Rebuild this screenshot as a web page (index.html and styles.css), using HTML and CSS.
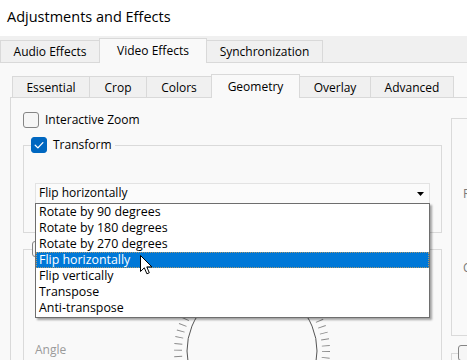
FILE: index.html
```html
<!DOCTYPE html>
<html>
<head>
<meta charset="utf-8">
<link rel="stylesheet" href="styles.css">
</head>
<body>
<div class="window">
  <div class="titlebar">Adjustments and Effects</div>
  <div class="tabstrip outer">
    <div class="tab w-audio">Audio Effects</div>
    <div class="tab sel w-video">Video Effects</div>
    <div class="tab w-sync">Synchronization</div>
  </div>
  <div class="outer-pane">
    <div class="tabstrip inner">
      <div class="itab w-ess">Essential</div>
      <div class="itab w-crop">Crop</div>
      <div class="itab w-colors">Colors</div>
      <div class="itab sel w-geo">Geometry</div>
      <div class="itab w-overlay">Overlay</div>
      <div class="itab w-adv">Advanced</div>
    </div>
    <div class="inner-pane">
      <div class="left-col">
        <div class="check-row"><span class="cb"></span><span class="lbl">Interactive Zoom</span></div>
        <fieldset class="group transform">
          <legend><span class="legend-inner"><span class="cb checked"><svg width="16" height="16" viewBox="0 0 16 16"><path d="M4.2 8.3 L6.9 10.9 L11.9 5.6" fill="none" stroke="#fff" stroke-width="1.3" stroke-linecap="round" stroke-linejoin="round"/></svg></span><span class="lbl">Transform</span></span></legend>
          <div class="combo"><span class="combo-text">Flip horizontally</span><svg class="arrow" width="7" height="4" viewBox="0 0 7 4"><polygon points="0,0 7,0 3.5,4" fill="#000"/></svg></div>
        </fieldset>
        <fieldset class="group rotate">
          <legend><span class="legend-inner"><span class="cb"></span></span></legend>
          <svg class="dial" width="417" height="85" viewBox="0 0 417 85">
            <circle cx="228" cy="94" r="74" fill="none" stroke="#8a8a8a" stroke-width="8" stroke-dasharray="0.9 5.558"/>
            <circle cx="228" cy="94" r="65" fill="none" stroke="#555" stroke-width="1"/>
          </svg>
          <div class="angle">Angle</div>
        </fieldset>
      </div>
      <div class="right-col">
        <fieldset class="group side">
          <legend><span class="legend-inner"><span class="cb"></span></span></legend>
          <div class="side-label first">R</div>
          <div class="side-label second">C</div>
        </fieldset>
        <fieldset class="group side2">
          <legend><span class="legend-inner"><span class="cb"></span></span></legend>
          <div class="side-fill"></div>
        </fieldset>
      </div>
    </div>
  </div>
  <ul class="dropdown">
    <li>Rotate by 90 degrees</li>
    <li>Rotate by 180 degrees</li>
    <li>Rotate by 270 degrees</li>
    <li class="hl">Flip horizontally</li>
    <li>Flip vertically</li>
    <li>Transpose</li>
    <li>Anti-transpose</li>
  </ul>
  <svg class="cursor" width="13" height="21" viewBox="0 0 13 21"><path d="M0.5 0.5 L0.5 16.5 L4.3 12.8 L6.9 18.8 L9.3 17.8 L6.8 11.9 L11.9 11.9 Z" fill="#fff" stroke="#000" stroke-width="1" stroke-linejoin="miter"/></svg>
</div>
</body>
</html>
```

FILE: styles.css
```css
* { box-sizing: border-box; }
html, body { margin: 0; padding: 0; }
body {
  width: 467px;
  height: 360px;
  overflow: hidden;
  background: #f9f9f9;
  font-family: "Open Sans", "Noto Sans", sans-serif;
  font-size: 12px;
  line-height: 16px;
  color: #000;
}
.window {
  position: relative;
  width: 467px;
  height: 360px;
  overflow: hidden;
  background: #f9f9f9;
}
.titlebar {
  height: 36px;
  background: #fff;
  padding: 7px 0 0 7px;
  font-size: 14.5px;
  line-height: 20px;
}
.tabstrip { display: flex; align-items: flex-end; }
.tabstrip.outer { height: 26px; background: #f0f0f0; }
.tab {
  height: 22px;
  padding-top: 3px;
  text-align: center;
  background: #f0f0f0;
  border: 1px solid #d9d9d9;
  border-bottom: none;
  margin-left: -1px;
  white-space: nowrap;
}
.tab:first-child { margin-left: 0; }
.tab.sel {
  position: relative;
  z-index: 1;
  height: 25px;
  padding-top: 4px;
  margin-bottom: -1px;
  background: #f9f9f9;
}
.w-audio { width: 100px; }
.w-video { width: 108px; }
.w-sync { width: 117px; }
.outer-pane {
  border-top: 1px solid #d9d9d9;
  background: #f9f9f9;
  height: 298px;
}
.tabstrip.inner { height: 34px; padding-left: 12px; }
.itab {
  height: 21px;
  padding-top: 3px;
  text-align: center;
  background: #f0f0f0;
  border: 1px solid #d9d9d9;
  border-bottom: none;
  margin-left: -1px;
  white-space: nowrap;
}
.itab:first-child { margin-left: 0; }
.itab.sel {
  position: relative;
  z-index: 1;
  height: 24px;
  padding-top: 4px;
  margin-bottom: -1px;
  background: #f9f9f9;
}
.w-ess { width: 78px; }
.w-crop { width: 58px; }
.w-colors { width: 66px; }
.w-geo { width: 89px; }
.w-overlay { width: 72px; }
.w-adv { width: 84px; }
.inner-pane {
  margin-left: 10px;
  width: 480px;
  height: 270px;
  border-top: 1px solid #d9d9d9;
  border-left: 1px solid #d9d9d9;
  padding-left: 12px;
  display: flex;
  gap: 8px;
  align-items: flex-start;
}
.left-col {
  width: 419px;
  margin-top: 14px;
  display: flex;
  flex-direction: column;
}
.right-col {
  width: 60px;
  margin-top: 12px;
  margin-left: 1px;
  display: flex;
  flex-direction: column;
}
.check-row { display: flex; align-items: center; height: 16px; gap: 6px; }
.cb {
  display: inline-block;
  flex: none;
  width: 16px;
  height: 16px;
  border: 1px solid #858585;
  border-radius: 3px;
  background: #f6f6f6;
}
.cb.checked {
  border-color: #0067c0;
  background: #0067c0;
  position: relative;
}
.cb.checked svg { position: absolute; left: -1px; top: -1px; }
.lbl { white-space: nowrap; }
.group {
  margin: 0;
  padding: 0;
  min-width: 0;
  border: 1px solid #dadada;
}
.group legend { padding: 0 3px 0 0; margin-left: 7px; }
.legend-inner { display: flex; align-items: center; gap: 6px; height: 16px; }
.transform { margin-top: 9px; }
.combo {
  margin: 30px 11px 28px 11px;
  height: 21px;
  border: 1px solid #e3e3e3;
  background: #fbfbfb;
  display: flex;
  align-items: center;
  justify-content: space-between;
  padding: 0 5px 0 3px;
}
.combo-text { padding-bottom: 2px; white-space: nowrap; }
.rotate { margin-top: 8px; height: 200px; }
.rotate legend { margin-left: 8px; }
.dial { display: block; overflow: visible; }
.angle { padding-left: 11px; color: #9a9a9a; }
.side { margin-top: 0; padding: 0 0 59px 11px; }
.side legend { margin-left: 6px; }
.side-label { color: #7a7a7a; }
.side-label.first { margin-top: 60px; }
.side-label.second { margin-top: 58px; }
.side2 { margin-top: 9px; height: 60px; }
.side2 legend { margin-left: 6px; }
.dropdown {
  position: absolute;
  left: 35px;
  top: 203px;
  width: 395px;
  height: 115px;
  margin: 0;
  padding: 0;
  list-style: none;
  background: #fff;
  border: 1px solid #6e6e6e;
  box-shadow: 2px 2px 2px rgba(0, 0, 0, 0.35);
  z-index: 5;
  font-size: 12.4px;
}
.dropdown li {
  height: 16px;
  line-height: 16px;
  padding-left: 3px;
  white-space: nowrap;
}
.dropdown li.hl {
  background: #0078d7;
  color: #fff;
  outline: 1px dotted #a89870;
  outline-offset: -1px;
}
.cursor { position: absolute; left: 140px; top: 255px; z-index: 6; }
```
